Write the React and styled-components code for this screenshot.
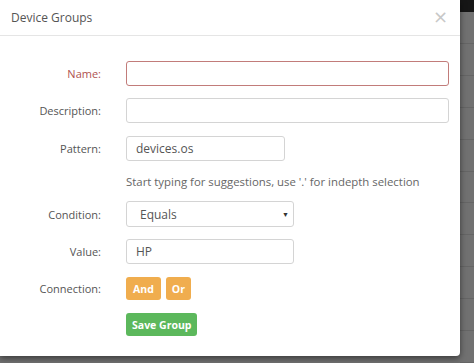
import styled, { createGlobalStyle } from "styled-components";

const GlobalStyle = createGlobalStyle`
  html, body {
    margin: 0;
    padding: 0;
    height: 100%;
    background: #6f6f6f;
    font-family: "Open Sans", "Liberation Sans", sans-serif;
  }
  #root {
    height: 100%;
  }
`;

const Page = styled.div`
  display: flex;
  height: 363px;
  width: 474px;
  overflow: hidden;
`;

const Modal = styled.div`
  width: 460px;
  height: 356px;
  background: #fff;
  border-bottom-right-radius: 4px;
  box-shadow: 0 2px 6px rgba(0, 0, 0, 0.5);
  display: flex;
  flex-direction: column;
  flex-shrink: 0;
  position: relative;
  z-index: 1;
`;

const Header = styled.div`
  height: 35px;
  border-bottom: 1px solid #e5e5e5;
  display: flex;
  align-items: center;
  justify-content: space-between;
  padding: 0 12px 0 11px;
  h4 {
    margin: 0;
    font-size: 12px;
    font-weight: 400;
    color: #555;
  }
`;

const Close = styled.span`
  font-size: 18px;
  line-height: 1;
  color: #c8c8c8;
  font-family: "DejaVu Sans", sans-serif;
  margin-top: -2px;
`;

const Body = styled.div`
  padding-top: 25px;
  display: flex;
  flex-direction: column;
  gap: 12px;
`;

const Row = styled.div`
  display: grid;
  grid-template-columns: 101px 1fr;
  column-gap: 25px;
  align-items: center;
  padding-right: 11px;
  margin-top: ${(p) => p.mt || 0};
`;

const Label = styled.label`
  text-align: right;
  font-size: 11px;
  color: ${(p) => (p.error ? "#b0524f" : "#555")};
`;

const Input = styled.input`
  box-sizing: border-box;
  height: 25px;
  width: ${(p) => p.w || "100%"};
  border: 1px solid ${(p) => (p.error ? "#c27c7a" : "#d4d4d4")};
  border-radius: 3px;
  padding: 0 9px;
  font-family: inherit;
  font-size: 12px;
  color: #555;
  outline: none;
`;

const Select = styled.div`
  box-sizing: border-box;
  height: 26px;
  width: 168px;
  border: 1px solid #d4d4d4;
  border-radius: 3px;
  padding: 0 4px 0 13px;
  display: flex;
  align-items: center;
  justify-content: space-between;
  font-size: 12px;
  color: #555;
  span {
    font-size: 7px;
    color: #333;
  }
`;

const Help = styled.div`
  grid-column: 2;
  font-size: 11.4px;
  line-height: 13px;
  padding: 2px 0 1px;
  color: #666;
`;

const Buttons = styled.div`
  grid-column: 2;
  display: flex;
  gap: 5px;
`;

const Btn = styled.button`
  height: 23px;
  border: none;
  border-radius: 3px;
  padding: 0 ${(p) => p.px || "7px"};
  background: ${(p) => p.bg};
  color: #fff;
  font-family: inherit;
  font-size: 10.5px;
  font-weight: 700;
`;

const Backdrop = styled.div`
  flex: 1;
  display: flex;
  flex-direction: column;
  background: #717171;
`;

const TopBar = styled.div`
  height: 12px;
  background: #161616;
`;

const Line = styled.div`
  height: 31px;
  border-bottom: 1px solid #656565;
`;

export default function App() {
  return (
    <>
      <GlobalStyle />
      <Page>
        <Modal>
          <Header>
            <h4>Device Groups</h4>
            <Close>×</Close>
          </Header>
          <Body>
            <Row>
              <Label error>Name:</Label>
              <Input error />
            </Row>
            <Row>
              <Label>Description:</Label>
              <Input />
            </Row>
            <Row mt="1px">
              <Label>Pattern:</Label>
              <Input w="159px" defaultValue="devices.os" />
            </Row>
            <Row>
              <Help>Start typing for suggestions, use '.' for indepth selection</Help>
            </Row>
            <Row>
              <Label>Condition:</Label>
              <Select>
                Equals<span>▼</span>
              </Select>
            </Row>
            <Row>
              <Label>Value:</Label>
              <Input w="168px" defaultValue="HP" />
            </Row>
            <Row mt="1px">
              <Label>Connection:</Label>
              <Buttons>
                <Btn bg="#f0ad4e">And</Btn>
                <Btn bg="#f0ad4e" px="6px">Or</Btn>
              </Buttons>
            </Row>
            <Row mt="1px">
              <Buttons>
                <Btn bg="#5cb85c" px="6px">Save Group</Btn>
              </Buttons>
            </Row>
          </Body>
        </Modal>
        <Backdrop>
          <TopBar />
          {Array.from({ length: 11 }).map((_, i) => (
            <Line key={i} />
          ))}
        </Backdrop>
      </Page>
    </>
  );
}
